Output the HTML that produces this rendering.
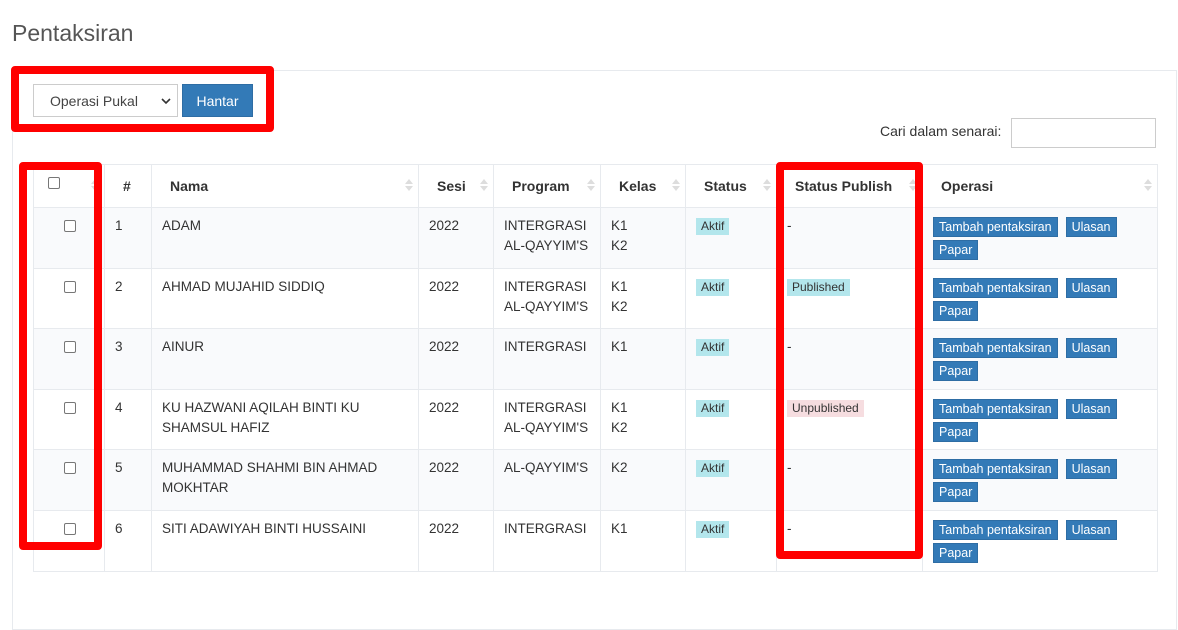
<!DOCTYPE html>
<html><head><style>
*{box-sizing:border-box}
body{margin:0;width:1178px;height:574px;background:#fff;font-family:"Liberation Sans",sans-serif;color:#333;font-size:13px;position:relative;overflow:hidden}
h1{position:absolute;left:12px;top:20px;margin:0;font-weight:normal;font-size:23px;color:#555}
.panel{position:absolute;left:12px;top:70px;width:1165px;height:560px;border:1px solid #e7eaee}
.sel{position:absolute;left:33px;top:84px;width:145px;height:33px;border:1px solid #ccc;background:#fff;font-size:14px;padding:8px 0 0 16px;color:#444}
.sel svg{position:absolute;right:6px;top:12px}
.btn{position:absolute;left:182px;top:84px;width:71px;height:33px;background:#337ab7;color:#fff;font-size:14px;text-align:center;line-height:32px;border:1px solid #2e6da4}
.cari{position:absolute;left:880px;top:123px;font-size:14px;color:#333}
.inp{position:absolute;left:1011px;top:118px;width:145px;height:30px;border:1px solid #ccc}
table{position:absolute;left:33px;top:164px;border-collapse:collapse;font-size:13.5px;table-layout:fixed}
td,th{border:1px solid #e7eaee;vertical-align:top;padding:10px;text-align:left}
th{height:43px;font-weight:bold;font-size:14px;padding:13px 10px 0;position:relative}
td{height:60.6px;padding:8px 10px 0;line-height:20px}
tbody tr:nth-child(odd){background:#f9fafc}
.arr{position:absolute;right:6px;top:14px;width:7px}
.arr:before{content:"";position:absolute;border:4px solid transparent;border-bottom:5px solid #ddd;border-top:0;top:0}
.arr:after{content:"";position:absolute;border:4px solid transparent;border-top:5px solid #ddd;border-bottom:0;top:7px}
.cb{display:inline-block;width:12px;height:12px;border:1px solid #777;border-radius:2px;background:#fff;margin-top:4px}
.lb{display:inline-block;font-size:12px;padding:0 5px;line-height:17px;background:#b3e6ec;color:#333}
.lr{background:#f6dde0}
.ops{line-height:0;padding-top:9px}
.b{display:inline-block;background:#337ab7;color:#fff;font-size:12.5px;padding:0 5px;line-height:18px;border:1px solid #2e6da4;margin:0 8px 3px 0;vertical-align:top}
.red{position:absolute;border:8px solid #f00;border-radius:4px}
</style></head><body>
<h1>Pentaksiran</h1>
<div class="panel"></div>
<div class="sel">Operasi Pukal<svg width="10" height="8" viewBox="0 0 10 8"><path d="M1 2 L5 6 L9 2" stroke="#333" stroke-width="1.6" fill="none"/></svg></div>
<div class="btn">Hantar</div>
<div class="cari">Cari dalam senarai:</div>
<div class="inp"></div>
<table style="width:1124px">
<colgroup><col style="width:71px"><col style="width:47px"><col style="width:267px"><col style="width:75px"><col style="width:107px"><col style="width:85px"><col style="width:91px"><col style="width:146px"><col style="width:235px"></colgroup>
<thead><tr>
<th style="padding-left:14px;padding-top:11px"><span class="cb" style="margin:0"></span><span class="arr"></span></th>
<th style="padding-left:18px">#</th>
<th style="padding-left:18px">Nama<span class="arr"></span></th>
<th style="padding-left:18px">Sesi<span class="arr"></span></th>
<th style="padding-left:18px">Program<span class="arr"></span></th>
<th style="padding-left:18px">Kelas<span class="arr"></span></th>
<th style="padding-left:18px">Status<span class="arr"></span></th>
<th style="padding-left:18px">Status Publish<span class="arr"></span></th>
<th style="padding-left:18px">Operasi<span class="arr"></span></th>
</tr></thead>
<tbody>
<tr><td style="padding-left:30px"><span class="cb"></span></td><td>1</td><td>ADAM</td><td>2022</td><td>INTERGRASI<br>AL-QAYYIM'S</td><td>K1<br>K2</td><td><span class="lb">Aktif</span></td><td>-</td><td class="ops"><span class="b">Tambah pentaksiran</span><span class="b">Ulasan</span><br><span class="b">Papar</span></td></tr>
<tr><td style="padding-left:30px"><span class="cb"></span></td><td>2</td><td>AHMAD MUJAHID SIDDIQ</td><td>2022</td><td>INTERGRASI<br>AL-QAYYIM'S</td><td>K1<br>K2</td><td><span class="lb">Aktif</span></td><td><span class="lb">Published</span></td><td class="ops"><span class="b">Tambah pentaksiran</span><span class="b">Ulasan</span><br><span class="b">Papar</span></td></tr>
<tr><td style="padding-left:30px"><span class="cb"></span></td><td>3</td><td>AINUR</td><td>2022</td><td>INTERGRASI</td><td>K1</td><td><span class="lb">Aktif</span></td><td>-</td><td class="ops"><span class="b">Tambah pentaksiran</span><span class="b">Ulasan</span><br><span class="b">Papar</span></td></tr>
<tr><td style="padding-left:30px"><span class="cb"></span></td><td>4</td><td>KU HAZWANI AQILAH BINTI KU<br>SHAMSUL HAFIZ</td><td>2022</td><td>INTERGRASI<br>AL-QAYYIM'S</td><td>K1<br>K2</td><td><span class="lb">Aktif</span></td><td><span class="lb lr">Unpublished</span></td><td class="ops"><span class="b">Tambah pentaksiran</span><span class="b">Ulasan</span><br><span class="b">Papar</span></td></tr>
<tr><td style="padding-left:30px"><span class="cb"></span></td><td>5</td><td>MUHAMMAD SHAHMI BIN AHMAD<br>MOKHTAR</td><td>2022</td><td>AL-QAYYIM'S</td><td>K2</td><td><span class="lb">Aktif</span></td><td>-</td><td class="ops"><span class="b">Tambah pentaksiran</span><span class="b">Ulasan</span><br><span class="b">Papar</span></td></tr>
<tr><td style="padding-left:30px"><span class="cb"></span></td><td>6</td><td>SITI ADAWIYAH BINTI HUSSAINI</td><td>2022</td><td>INTERGRASI</td><td>K1</td><td><span class="lb">Aktif</span></td><td>-</td><td class="ops"><span class="b">Tambah pentaksiran</span><span class="b">Ulasan</span><br><span class="b">Papar</span></td></tr>
</tbody></table>
<div class="red" style="left:11px;top:66px;width:263px;height:66px"></div>
<div class="red" style="left:19px;top:162px;width:83px;height:388px"></div>
<div class="red" style="left:776px;top:162px;width:147px;height:397px"></div>
</body></html>
